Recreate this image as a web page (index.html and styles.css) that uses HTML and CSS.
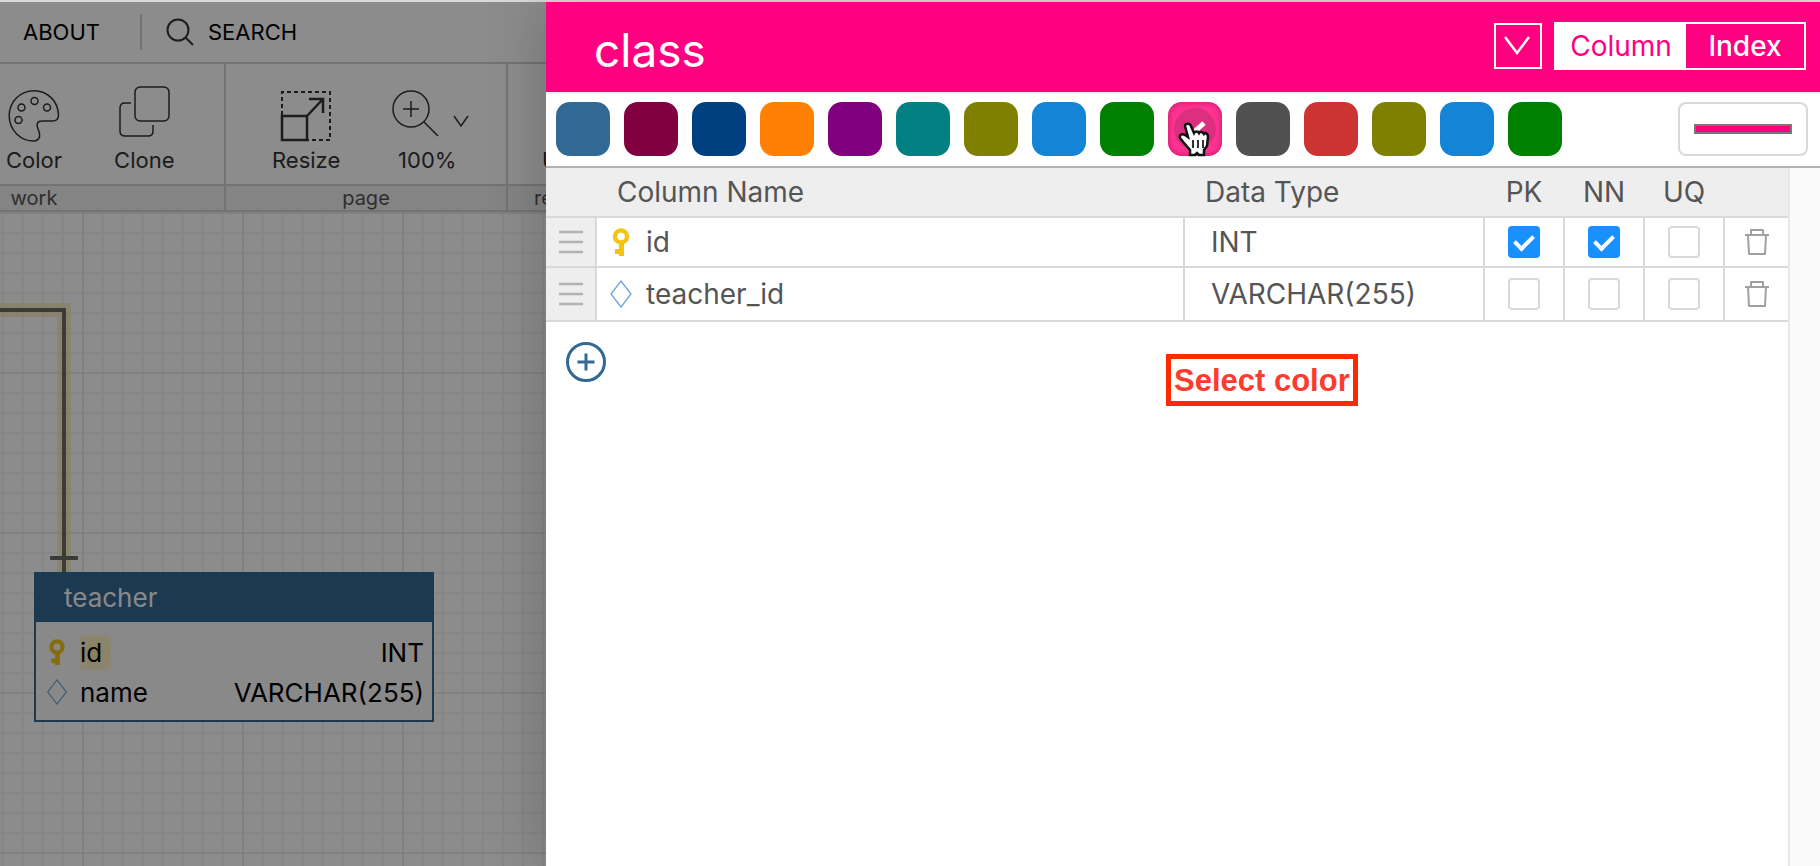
FILE: index.html
```html
<!DOCTYPE html>
<html lang="en">
<head>
    <meta charset="UTF-8">
    <meta name="viewport" content="width=device-width, initial-scale=1.0">
    <title>class</title>
    <link rel="stylesheet" href="styles.css">
</head>
<body>
    <div class="app">
        <main class="workspace">
            <nav class="menu">
                <a href="#about">ABOUT</a>
                <span class="divider"></span>
                <a class="search" href="#search">
                    <svg width="28" height="28" viewBox="0 0 28 28"><circle cx="12" cy="12" r="10.5"/><path d="M19.5 19.500L27 27"/></svg>
                    SEARCH
                </a>
            </nav>
            <div class="toolbar">
                <section class="group work">
                    <div class="tools">
                        <button type="button" class="tool">
                            <svg width="52" height="52" viewBox="0 0 52 52"><path d="M34.500 51c4-1 5-4 4.500-7.500-.7-4-3.500-7-2-10.500 1-2 3-2 5-2h10c3.500 0 6-1.500 6-6C57.500 11 47 .700 33.500 .700 19.500 .700 8.700 12 8.700 25.800 8.700 40 20 51.500 34.500 51z" transform="translate(-7.500 0)"/><circle cx="10.500" cy="30" r="3.500"/><circle cx="13.500" cy="17.500" r="3.500"/><circle cx="26.500" cy="11" r="3.500"/><circle cx="39" cy="17.500" r="3.500"/></svg>
                            <span>Color</span>
                        </button>
                        <button type="button" class="tool">
                            <svg width="52" height="52" viewBox="0 4 52 52"><rect x="17" y="1" width="34" height="34" rx="5"/><path d="M13 17H7q-5 0-5 5v23q0 5 5 5h23q5 0 5-5v-6"/></svg>
                            <span>Clone</span>
                        </button>
                    </div>
                    <div class="group-name">work</div>
                </section>
                <section class="group page">
                    <div class="tools">
                        <button type="button" class="tool">
                            <svg width="52" height="52" viewBox="0 0 52 52"><path d="M2 25V2h48v48H27" stroke-width="2" stroke-dasharray="4 3"/><path d="M2 26h25v24H2zM27 26L43 9M29 9h14v14" stroke-width="2.500"/></svg>
                            <span>Resize</span>
                        </button>
                        <button type="button" class="tool">
                            <svg width="70" height="52" viewBox="0 0 70 52"><circle cx="19" cy="19" r="18"/><path d="M11 19h16M19 11v16M32 32L46 46M62 26l7 10 7-10"/></svg>
                            <span>100%</span>
                        </button>
                    </div>
                    <div class="group-name">page</div>
                </section>
                <section class="group redo">
                    <div class="tools">
                        <button type="button" class="tool">
                            <svg width="52" height="52" viewBox="0 0 52 52"></svg>
                            <span>Undo</span>
                        </button>
                    </div>
                    <div class="group-name">redo</div>
                </section>
            </div>
            <div class="canvas">
                <svg class="relation" width="90" height="360" viewBox="0 0 90 360">
                    <path class="glow" d="M0 98H64V360"/>
                    <path class="line" d="M0 98H64V360M50 346H78"/>
                </svg>
                <article class="entity">
                    <h2>teacher</h2>
                    <ul>
                        <li>
                            <svg class="key" width="22" height="28" viewBox="0 0 22 28"><use href="#key"/></svg>
                            <span class="field"><mark>id</mark></span><span>INT</span>
                        </li>
                        <li>
                            <svg class="diamond" width="22" height="28" viewBox="0 0 22 28"><use href="#diamond"/></svg>
                            <span class="field">name</span><span>VARCHAR(255)</span>
                        </li>
                    </ul>
                </article>
            </div>
            <div class="mask"></div>
        </main>

        <aside class="drawer">
            <header class="title-bar">
                <h1>class</h1>
                <button type="button" class="toggle" aria-label="More">
                    <svg width="28" height="20" viewBox="0 0 28 20"><path d="M1 1l12 16L25 1"/></svg>
                </button>
                <div class="tabs">
                    <button type="button" class="active">Column</button>
                    <button type="button">Index</button>
                </div>
            </header>

            <div class="palette">
                <button type="button" class="swatch blue" aria-label="Blue"></button>
                <button type="button" class="swatch maroon" aria-label="Maroon"></button>
                <button type="button" class="swatch navy" aria-label="Navy"></button>
                <button type="button" class="swatch orange" aria-label="Orange"></button>
                <button type="button" class="swatch purple" aria-label="Purple"></button>
                <button type="button" class="swatch teal" aria-label="Teal"></button>
                <button type="button" class="swatch olive" aria-label="Olive"></button>
                <button type="button" class="swatch sky" aria-label="Sky"></button>
                <button type="button" class="swatch green" aria-label="Green"></button>
                <button type="button" class="swatch pink selected" aria-label="Pink">
                    <svg width="54" height="54" viewBox="0 0 54 54">
                        <circle class="ripple" cx="27" cy="27" r="21"/>
                        <path class="check" d="M20 26l5 5 11-10"/>
                        <path class="hand" d="M17 24c0-3 5-3 6 0l3 7c1-2 4-2 5 0 1-2 4-1 5 1 2-2 4 0 4 3l-1 9-3 4v5h-5l-2-2-2 2h-5v-5l-6-7-4-5c-1-3 2-5 5-3l3 2z"/>
                        <path class="fingers" d="M25 38v8M30 38v8M35 38v8"/>
                    </svg>
                </button>
                <button type="button" class="swatch gray" aria-label="Gray"></button>
                <button type="button" class="swatch red" aria-label="Red"></button>
                <button type="button" class="swatch olive" aria-label="Olive"></button>
                <button type="button" class="swatch sky" aria-label="Sky"></button>
                <button type="button" class="swatch green" aria-label="Green"></button>
                <input type="color" class="picker" value="#ff0080" aria-label="Custom color">
            </div>

            <div class="content">
                <div class="list">
                    <table>
                        <colgroup>
                            <col class="col-handle"><col><col class="col-type">
                            <col class="col-flag"><col class="col-flag"><col class="col-flag">
                            <col class="col-delete">
                        </colgroup>
                        <thead>
                            <tr>
                                <th></th>
                                <th>Column Name</th>
                                <th>Data Type</th>
                                <th class="flag">PK</th>
                                <th class="flag">NN</th>
                                <th class="flag">UQ</th>
                                <th></th>
                            </tr>
                        </thead>
                        <tbody>
                            <tr>
                                <td class="handle"><svg width="26" height="24" viewBox="0 0 26 24"><use href="#bars"/></svg></td>
                                <td>
                                    <div class="name">
                                        <svg class="key" width="22" height="28" viewBox="0 0 22 28"><use href="#key"/></svg>
                                        <input type="text" value="id" aria-label="Column Name">
                                    </div>
                                </td>
                                <td class="type"><input type="text" value="INT" aria-label="Data Type"></td>
                                <td class="flag"><input type="checkbox" aria-label="PK" checked></td>
                                <td class="flag"><input type="checkbox" aria-label="NN" checked></td>
                                <td class="flag"><input type="checkbox" aria-label="UQ"></td>
                                <td class="delete"><button type="button" aria-label="Delete"><svg width="24" height="26" viewBox="0 0 24 26"><use href="#trash"/></svg></button></td>
                            </tr>
                            <tr>
                                <td class="handle"><svg width="26" height="24" viewBox="0 0 26 24"><use href="#bars"/></svg></td>
                                <td>
                                    <div class="name">
                                        <svg class="diamond" width="22" height="28" viewBox="0 0 22 28"><use href="#diamond"/></svg>
                                        <input type="text" value="teacher_id" aria-label="Column Name">
                                    </div>
                                </td>
                                <td class="type"><input type="text" value="VARCHAR(255)" aria-label="Data Type"></td>
                                <td class="flag"><input type="checkbox" aria-label="PK"></td>
                                <td class="flag"><input type="checkbox" aria-label="NN"></td>
                                <td class="flag"><input type="checkbox" aria-label="UQ"></td>
                                <td class="delete"><button type="button" aria-label="Delete"><svg width="24" height="26" viewBox="0 0 24 26"><use href="#trash"/></svg></button></td>
                            </tr>
                        </tbody>
                    </table>
                    <button type="button" class="add" aria-label="Add column">
                        <svg width="40" height="40" viewBox="0 0 40 40"><circle cx="20" cy="20" r="18.500"/><path d="M11.500 20h17M20 11.500v17"/></svg>
                    </button>
                </div>
                <div class="gutter"></div>
            </div>
            <p class="note">Select color</p>
        </aside>
    </div>

    <!-- shared icons -->
    <svg class="defs" width="0" height="0">
        <symbol id="key" viewBox="0 0 18 28"><circle cx="9" cy="8.500" r="6" fill="none" stroke="#f4c414" stroke-width="4.500"/><path d="M7 15h5v13H7v-2H3v-5h4z" fill="#f4c414"/></symbol>
        <symbol id="diamond" viewBox="0 0 22 28"><path d="M11 1L21 14 11 27 1 14z" fill="none" stroke="#6fa3dc" stroke-width="1.300"/></symbol>
        <symbol id="bars" viewBox="0 0 26 24"><path d="M1 2h24M1 12h24M1 22h24" stroke="#b3b3b3" stroke-width="2.400"/></symbol>
        <symbol id="trash" viewBox="0 0 24 26"><path d="M0 6h24M6 6V1h12v5M3 6l1 19h16l1-19" fill="none" stroke="#a0a0a0" stroke-width="2" stroke-linejoin="round"/></symbol>
    </svg>
</body>
</html>
```
FILE: styles.css
```css
*{
    margin: 0;
    padding: 0;
    box-sizing: border-box;
}

body{
    background: #fff;
    font-family: Inter, "Liberation Sans", sans-serif;
}
button, input{
    font: inherit;
    color: inherit;
    background: none;
    border: none;
}
button{
    cursor: pointer;
}
svg{
    display: block;
    flex: none;
}
.defs{
    position: absolute;
}

.app{
    display: flex;
    min-height: 100vh;
    border-top: 2px solid #d9d9d9;
}

/* workspace behind the drawer */
.workspace{
    position: relative;
    width: 30%;
    overflow: hidden;
    display: flex;
    flex-direction: column;
}
.mask{
    position: absolute;
    inset: 0;
    background: rgba(0,0,0,0.45);
}
.menu{
    display: flex;
    align-items: center;
    height: 62px;
    padding-left: 23px;
    border-bottom: 2px solid #d2d2d2;
    font-size: 22px;
}
.menu a{
    color: #000;
    text-decoration: none;
}
.menu .divider{
    width: 2px;
    height: 36px;
    margin: 0 24px 0 40px;
    background: #d2d2d2;
}
.menu .search{
    display: flex;
    align-items: center;
    gap: 14px;
}
.menu svg{
    fill: none;
    stroke: #333;
    stroke-width: 2;
}

.toolbar{
    display: flex;
    height: 148px;
}
.group{
    flex: none;
    display: flex;
    flex-direction: column;
    border-right: 2px solid #d2d2d2;
}
.group.work{
    width: 226px;
}
.group.page{
    width: 282px;
}
.group.redo{
    width: 180px;
}
.tools{
    flex: 1;
    display: flex;
    align-items: center;
    padding-top: 15px;
}
.tool{
    display: flex;
    flex-direction: column;
    align-items: center;
    gap: 4px;
    color: #333;
    font-size: 22px;
    line-height: 28px;
}
.tool svg{
    overflow: visible;
    fill: none;
    stroke: #333;
    stroke-width: 1.5;
}
.work .tools{
    gap: 52px;
    padding-left: 6px;
}
.page .tools{
    gap: 52px;
    padding-left: 46px;
}
.redo .tools{
    padding-left: 34px;
}
.group-name{
    height: 28px;
    border-top: 2px solid #d2d2d2;
    border-bottom: 2px solid #d2d2d2;
    background: #f0f0f0;
    color: #555;
    font-size: 20px;
    line-height: 24px;
    text-align: center;
}
.work .group-name{
    padding-right: 156px;
}
.redo .group-name{
    padding-left: 26px;
    text-align: left;
}

.canvas{
    position: relative;
    flex: 1;
    background-image:
        linear-gradient(#ebebeb 2px, transparent 2px),
        linear-gradient(90deg, #ebebeb 2px, transparent 2px),
        linear-gradient(#f5f5f5 2px, transparent 2px),
        linear-gradient(90deg, #f5f5f5 2px, transparent 2px);
    background-size: 160px 160px, 160px 160px, 20px 20px, 20px 20px;
    background-position: 82px 0;
}
.relation{
    position: absolute;
    left: 0;
    top: 0;
    fill: none;
}
.relation .glow{
    stroke: rgba(240,228,150,0.5);
    stroke-width: 14;
}
.relation .line{
    stroke: #6b6b66;
    stroke-width: 4;
}
.entity{
    position: absolute;
    left: 34px;
    top: 360px;
    width: 400px;
    border: 2px solid #326894;
    background: #fafafa;
    font-size: 26px;
}
.entity h2{
    height: 48px;
    padding-left: 28px;
    background: #326894;
    color: #fafafa;
    font-size: 26px;
    font-weight: 400;
    line-height: 48px;
}
.entity ul{
    list-style: none;
    padding: 10px 8px 8px 10px;
}
.entity li{
    display: flex;
    align-items: center;
    height: 40px;
}
.entity svg{
    width: 22px;
    height: 26px;
    margin-right: 12px;
}
.entity .field{
    flex: 1;
}
.entity mark{
    background: radial-gradient(#fdeaa0, #fbf6df);
    color: #000;
    padding: 2px 9px 2px 0;
}

/* drawer */
.drawer{
    position: relative;
    flex: 1;
    display: flex;
    flex-direction: column;
    background: #fff;
    box-shadow: -12px 0 48px rgba(0,0,0,0.15);
    color: #555;
    font-size: 28px;
}
.title-bar{
    display: flex;
    align-items: center;
    gap: 12px;
    height: 90px;
    padding: 0 14px 2px 48px;
    background: #ff0080;
    color: #fff;
}
.title-bar h1{
    flex: 1;
    padding-top: 8px;
    font-size: 46px;
    font-weight: 400;
}
.toggle{
    display: flex;
    align-items: center;
    justify-content: center;
    width: 48px;
    height: 46px;
    border: 2px solid #fff;
}
.toggle svg{
    fill: none;
    stroke: #fff;
    stroke-width: 2.5;
}
.tabs{
    display: flex;
    height: 48px;
    border: 2px solid #fff;
}
.tabs button{
    width: 118px;
    font-weight: 500;
    line-height: 44px;
}
.tabs .active{
    width: 130px;
    background: #fff;
    color: #ff0080;
    font-weight: 400;
}

.palette{
    display: flex;
    gap: 14px;
    padding: 8px 12px 10px 10px;
    border-top: 2px solid #f0f0f0;
    border-bottom: 2px solid #b3b3b3;
}
.swatch{
    width: 54px;
    height: 54px;
    border-radius: 14px;
}
.blue{ background: #326894; }
.maroon{ background: #800040; }
.navy{ background: #004080; }
.orange{ background: #ff8005; }
.purple{ background: #800080; }
.teal{ background: #008080; }
.olive{ background: #808000; }
.sky{ background: #1485d6; }
.green{ background: #008000; }
.pink{ background: #ff3391; }
.gray{ background: #505050; }
.red{ background: #cc3333; }
.swatch.selected{
    box-shadow: inset 0 0 6px #c01468;
}
.swatch svg{
    overflow: visible;
}
.swatch .ripple{
    fill: #dd2f80;
}
.swatch .check{
    fill: none;
    stroke: #fff;
    stroke-width: 5;
}
.swatch .hand{
    fill: #fff;
    stroke: #111;
    stroke-width: 2.5;
}
.swatch .fingers{
    stroke: #333;
    stroke-width: 2;
}
.picker{
    width: 130px;
    height: 54px;
    margin-left: auto;
    padding: 20px 14px;
    border: 2px solid #d9d9d9;
    border-radius: 8px;
    cursor: pointer;
}
.picker::-webkit-color-swatch-wrapper{
    padding: 0;
}
.picker::-webkit-color-swatch{
    border: 2px solid #777;
    border-radius: 0;
}

.content{
    flex: 1;
    display: flex;
}
.list{
    flex: 1;
}
.gutter{
    width: 32px;
    border-left: 2px solid #e8e8e8;
    background: #fafafa;
}
table{
    width: 100%;
    table-layout: fixed;
    border-collapse: separate;
    border-spacing: 0;
}
.col-handle{ width: 51px; }
.col-type{ width: 300px; }
.col-flag{ width: 80px; }
.col-delete{ width: 63px; }
th{
    height: 50px;
    padding-left: 20px;
    border-bottom: 2px solid #d9d9d9;
    background: #eee;
    font-weight: 400;
    line-height: 36px;
    text-align: left;
}
th.flag{
    padding: 0 2px 0 0;
    text-align: center;
}
td{
    height: 50px;
    border-right: 2px solid #d9d9d9;
    border-bottom: 2px solid #d9d9d9;
}
tbody tr:last-child td{
    height: 54px;
}
td:last-child{
    border-right: none;
}
td input[type="text"]{
    display: block;
    width: 100%;
    height: 40px;
}
.handle{
    background: #eee;
}
.handle svg{
    margin: auto;
}
.name{
    display: flex;
    align-items: center;
    gap: 14px;
    padding-left: 13px;
}
.type{
    padding-left: 26px;
}
td.flag{
    text-align: center;
}
.flag input{
    appearance: none;
    display: block;
    width: 32px;
    height: 32px;
    margin: auto;
    border: 2px solid #d9d9d9;
    border-radius: 4px;
    background: #fff;
}
.flag input:checked{
    border-color: #1890ff;
    background: #1890ff;
}
.flag input:checked::before{
    content: "";
    display: block;
    width: 8px;
    height: 15px;
    margin: 3px auto;
    border: solid #fff;
    border-width: 0 4px 4px 0;
    transform: rotate(45deg);
}
.delete button{
    display: block;
    margin: auto;
}
.add{
    display: block;
    margin: 20px;
}
.add svg{
    fill: none;
    stroke: #326894;
    stroke-width: 3;
}

/* callout over the list */
.note{
    position: absolute;
    left: 620px;
    top: 352px;
    padding: 2px 3px 0;
    border: 5px solid #ff2a00;
    color: #ff3b30;
    font: bold 31px/40px "Liberation Sans", sans-serif;
}
```
